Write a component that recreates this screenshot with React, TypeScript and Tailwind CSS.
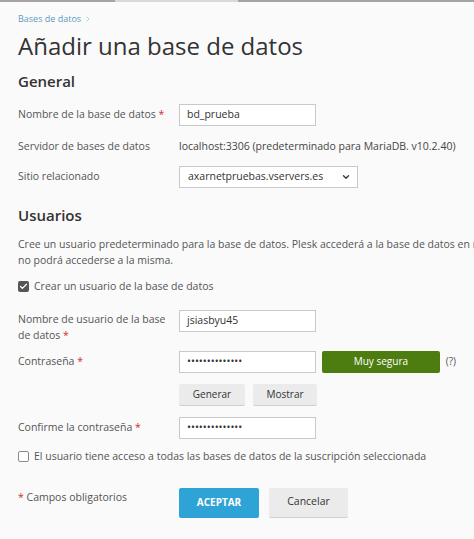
import { Check, ChevronDown, ChevronRight } from "lucide-react";

const font = { fontFamily: '"Open Sans", "Noto Sans", sans-serif' };

const Label = ({ text, required }: { text: string; required?: boolean }) => (
  <span>
    {text}
    {required && <span className="text-[#d02c2c]"> *</span>}
  </span>
);

const Input = ({ value }: { value: string }) => (
  <div className="w-[137px] h-[22px] shrink-0 border border-[#c9c9c9] bg-white flex items-center px-[7px] text-[10.5px] text-[#333]">
    {value}
  </div>
);

const GrayButton = ({ text, className }: { text: string; className: string }) => (
  <div
    className={`h-[22px] flex items-center justify-center bg-[#ebebeb] border-b border-[#cfcfcf] text-[10px] text-[#333] rounded-[2px] ${className}`}
  >
    {text}
  </div>
);

const App = () => {
  return (
    <div className="w-[474px] h-[539px] overflow-hidden bg-[#fafafa] text-[#555]" style={font}>
      <div className="flex h-[2px]">
        <div className="w-[115px] bg-[#a4a4a4]" />
        <div className="w-[123px] bg-[#d9d9d9]" />
        <div className="flex-1 bg-[#a4a4a4]" />
      </div>

      <div className="px-[18px]">
        <div className="mt-[10px] flex items-center gap-[3px] text-[9px] text-[#5b9bc0]">
          Bases de datos <ChevronRight size={8} className="text-[#9bb8c8]" />
        </div>
        <h1 className="mt-[5px] text-[24px] leading-[30px] text-[#333]">Añadir una base de datos</h1>
        <h2 className="mt-[10px] text-[15px] leading-[20px] font-semibold text-[#333]">General</h2>

        <div className="mt-[13px] text-[10.5px]">
          <div className="flex items-center h-[22px]">
            <div className="w-[161px] shrink-0">
              <Label text="Nombre de la base de datos" required />
            </div>
            <Input value="bd_prueba" />
          </div>
          <div className="flex items-center h-[22px] mt-[10px]">
            <div className="w-[161px] shrink-0">Servidor de bases de datos</div>
            <span className="text-[#444] whitespace-nowrap">
              localhost:3306 (predeterminado para MariaDB. v10.2.40)
            </span>
          </div>
          <div className="flex items-center h-[22px] mt-[8px]">
            <div className="w-[161px] shrink-0">Sitio relacionado</div>
            <div className="w-[179px] h-[22px] border border-[#c9c9c9] bg-white flex items-center justify-between pl-[8px] pr-[6px] text-[#333]">
              axarnetpruebas.vservers.es
              <ChevronDown size={10} strokeWidth={3} className="text-[#333]" />
            </div>
          </div>
        </div>

        <h2 className="mt-[17px] text-[15px] leading-[20px] font-semibold text-[#333]">Usuarios</h2>

        <div className="mt-[11px] text-[10.5px] leading-[16px] w-[760px]">
          <div>
            Cree un usuario predeterminado para la base de datos. Plesk accederá a la base de datos en nombre de este
            usuario. Si no crea ningún usuario,
          </div>
          <div>no podrá accederse a la misma.</div>
        </div>

        <div className="mt-[12px] flex items-center gap-[5px] text-[10.5px] h-[14px]">
          <div className="w-[11px] h-[11px] rounded-[2px] bg-[#555] flex items-center justify-center">
            <Check size={9} strokeWidth={3.5} className="text-white" />
          </div>
          Crear un usuario de la base de datos
        </div>

        <div className="mt-[16px] text-[10.5px]">
          <div className="flex items-start h-[33px]">
            <div className="w-[161px] shrink-0 leading-[16px] pt-[1px]">
              Nombre de usuario de la base
              <br />
              de datos <span className="text-[#d02c2c]">*</span>
            </div>
            <Input value="jsiasbyu45" />
          </div>

          <div className="flex items-center mt-[8px] h-[22px]">
            <div className="w-[161px] shrink-0">
              <Label text="Contraseña" required />
            </div>
            <Input value="••••••••••••••" />
            <div className="ml-[6px] w-[120px] h-[22px] bg-[#4d7c10] rounded-[2px] flex items-center justify-center text-[10px] text-white">
              Muy segura
            </div>
            <span className="ml-[6px] text-[10px]">(?)</span>
          </div>

          <div className="flex mt-[11px] ml-[161px] gap-[8px]">
            <GrayButton text="Generar" className="w-[66px]" />
            <GrayButton text="Mostrar" className="w-[64px]" />
          </div>

          <div className="flex items-center mt-[11px] h-[22px]">
            <div className="w-[161px] shrink-0">
              <Label text="Confirme la contraseña" required />
            </div>
            <Input value="••••••••••••••" />
          </div>

          <div className="mt-[11px] flex items-center gap-[5px] h-[14px] whitespace-nowrap">
            <div className="w-[11px] h-[11px] rounded-[2px] border border-[#8a8a8a] bg-white" />
            El usuario tiene acceso a todas las bases de datos de la suscripción seleccionada
          </div>

          <div className="mt-[24px] flex items-start h-[30px]">
            <div className="w-[161px] shrink-0 leading-[16px] pt-[1px]">
              <span className="text-[#d02c2c]">*</span> Campos obligatorios
            </div>
            <div className="w-[80px] h-[30px] bg-[#2ea3d6] rounded-[2px] flex items-center justify-center text-[10px] font-bold text-white">
              ACEPTAR
            </div>
            <div className="ml-[10px] w-[79px] h-[30px] bg-[#ebebeb] border-b border-[#cfcfcf] rounded-[2px] flex items-center justify-center text-[10.5px] text-[#333]">
              Cancelar
            </div>
          </div>
        </div>
      </div>
    </div>
  );
};

export default App;
